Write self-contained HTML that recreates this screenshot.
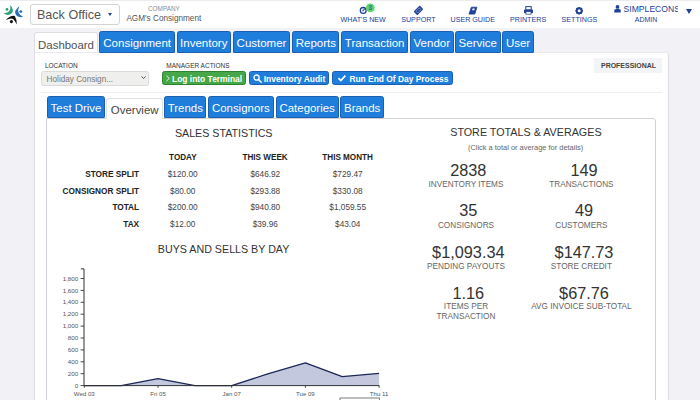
<!DOCTYPE html>
<html><head><meta charset="utf-8"><title>Back Office Dashboard</title>
<style>
*{box-sizing:border-box;margin:0;padding:0}
html,body{width:700px;height:400px;overflow:hidden}
body{background:#f2f2f6;font-family:"Liberation Sans",sans-serif;position:relative}
.t{position:absolute;white-space:nowrap}
.b{position:absolute}
</style></head><body>
<div class="b" style="left:0px;top:0px;width:700.00px;height:27.70px;background:#fff;"></div>
<div class="b" style="left:0px;top:0px;width:700.00px;height:1.20px;background:#ececee;"></div>
<svg class="b" style="left:0;top:0" width="30" height="28" viewBox="0 0 30 28">
<circle cx="7" cy="9.4" r="1.4" fill="#2f9e77"/>
<path d="M3.4 12.9 Q9 17.2 12.5 12.2 Q13.8 9 10.3 4.9 Q10.9 9.3 9.4 11 Q7.3 13.4 3.4 12.9 Z" fill="#2f9e77"/>
<circle cx="20.8" cy="11.6" r="1.45" fill="#2a6fb5"/>
<path d="M19.5 6.1 Q13 11 16.2 15.2 Q19 18 23.1 16.8 Q19.8 15.3 18.7 12.8 Q17.4 10 19.5 6.1 Z" fill="#2a6fb5"/>
<circle cx="11.4" cy="21.6" r="1.55" fill="#111"/>
<path d="M5.7 20.3 Q10 15 14.8 15.9 Q16.8 19 16.8 24.5 Q14.8 20.3 13.2 18.9 Q10 17.9 5.7 20.3 Z" fill="#111"/>
</svg>
<div class="b" style="left:30px;top:4.4px;width:89.80px;height:20.20px;border:1px solid #d4d4d4;border-radius:3px;background:#fff;"></div>
<div class="t" style="font-size:12.56px;line-height:14px;top:8px;color:#555;left:37px;">Back Office</div>
<div class="b" style="left:107.7px;top:13px;width:0;height:0;border-left:2.9px solid transparent;border-right:2.9px solid transparent;border-top:3.1px solid #20409a"></div>
<div class="t" style="font-size:6.4px;line-height:7px;top:5px;color:#8a8a8a;left:148px;">COMPANY</div>
<div class="t" style="font-size:8.2px;line-height:9px;top:14px;color:#555;left:126.4px;">AGM's Consignment</div>
<div class="t" style="font-size:7.15px;line-height:8px;top:16px;color:#20409a;left:363.2px;transform:translateX(-50%);">WHAT'S NEW</div>
<div class="t" style="font-size:7.15px;line-height:8px;top:16px;color:#20409a;left:418.4px;transform:translateX(-50%);">SUPPORT</div>
<div class="t" style="font-size:7.15px;line-height:8px;top:16px;color:#20409a;left:472.7px;transform:translateX(-50%);">USER GUIDE</div>
<div class="t" style="font-size:7.15px;line-height:8px;top:16px;color:#20409a;left:528.1px;transform:translateX(-50%);">PRINTERS</div>
<div class="t" style="font-size:7.15px;line-height:8px;top:16px;color:#20409a;left:579.4px;transform:translateX(-50%);">SETTINGS</div>
<div class="t" style="font-size:6.95px;line-height:7px;top:16px;color:#20409a;left:646px;transform:translateX(-50%);">ADMIN</div>
<div class="b" style="left:623.6px;top:0;width:54.4px;height:20px;overflow:hidden"><div class="t" style="left:0;top:4px;font-size:8.6px;line-height:10px;color:#20409a">SIMPLECONS</div></div>
<div class="b" style="left:685.6px;top:9px;width:0;height:0;border-left:3px solid transparent;border-right:3px solid transparent;border-top:5.6px solid #20409a"></div>
<svg class="b" style="left:350px;top:0" width="350" height="18" viewBox="350 0 350 18">
<circle cx="363.2" cy="10.4" r="2.9" fill="none" stroke="#20409a" stroke-width="1.25"/>
<path d="M362.8 10.9 L364.4 9.2" stroke="#20409a" stroke-width="1.1" stroke-linecap="round"/>
<circle cx="370.3" cy="7.8" r="4.4" fill="#5fd66a"/>
<text x="370.3" y="10.1" font-size="6.4" font-weight="bold" fill="#2f6f8f" text-anchor="middle" font-family="Liberation Sans, sans-serif">3</text>
<g transform="translate(418.5 10.4) rotate(-45)"><rect x="-4.3" y="-2.6" width="8.6" height="5.2" rx="0.8" fill="#20409a"/><rect x="-2.4" y="-1.2" width="4.8" height="2.4" fill="none" stroke="#fff" stroke-width="0.5" stroke-opacity="0.8"/></g>
<path d="M471.4 7.2 H476.9 L474.8 14.1 H469.0 Z" fill="#20409a" stroke="#20409a" stroke-width="0.8" stroke-linejoin="round"/>
<path d="M472.6 8.6 H474.8 L474.3 10.2 H472.1 Z" fill="#fff"/>
<rect x="525.8" y="6.6" width="5.4" height="3.4" fill="none" stroke="#20409a" stroke-width="1"/>
<rect x="524" y="9.6" width="9" height="3.6" rx="0.8" fill="#20409a"/>
<rect x="526" y="11.6" width="5" height="2.6" fill="#fff" stroke="#20409a" stroke-width="0.7"/>
<circle cx="579.2" cy="10.7" r="2.5" fill="none" stroke="#20409a" stroke-width="2"/>
<g stroke="#20409a" stroke-width="1.5" stroke-linecap="butt">
<path d="M579.2 6.9 V8.2 M579.2 13.2 V14.5 M575.4 10.7 H576.7 M581.7 10.7 H583 M576.5 8 L577.4 8.9 M581 12.5 L581.9 13.4 M576.5 13.4 L577.4 12.5 M581 8.9 L581.9 8"/></g>
<circle cx="617.5" cy="6.9" r="1.9" fill="#20409a"/>
<path d="M614.3 12.6 V10.6 Q614.3 9 616 9 H619 Q620.7 9 620.7 10.6 V12.6 Z" fill="#20409a"/>
</svg>
<div class="b" style="left:33.8px;top:52px;width:634.80px;height:368.00px;background:#fff;border:1px solid #dedee2;border-top-color:#ebebef;border-radius:0 3px 0 0;"></div>
<div class="b" style="left:33.8px;top:32px;width:64.40px;height:20.20px;background:#fff;border:1px solid #dedee2;border-bottom:none;border-radius:3px 3px 0 0;"></div>
<div class="t" style="font-size:11.42px;line-height:12px;top:39px;color:#505050;left:38.1px;">Dashboard</div>
<div class="b" style="left:99.4px;top:31.3px;width:75.60px;height:21.70px;background:#1f7ddb;border:1px solid #1a5fb0;border-radius:2.5px 2.5px 1px 1px;"></div>
<div class="t" style="font-size:11.5px;line-height:12px;top:37px;color:#fff;left:137.2px;transform:translateX(-50%);">Consignment</div>
<div class="b" style="left:176.5px;top:31.3px;width:54.50px;height:21.70px;background:#1f7ddb;border:1px solid #1a5fb0;border-radius:2.5px 2.5px 1px 1px;"></div>
<div class="t" style="font-size:11.5px;line-height:12px;top:37px;color:#fff;left:203.75px;transform:translateX(-50%);">Inventory</div>
<div class="b" style="left:232.6px;top:31.3px;width:57.80px;height:21.70px;background:#1f7ddb;border:1px solid #1a5fb0;border-radius:2.5px 2.5px 1px 1px;"></div>
<div class="t" style="font-size:11.5px;line-height:12px;top:37px;color:#fff;left:261.5px;transform:translateX(-50%);">Customer</div>
<div class="b" style="left:292.2px;top:31.3px;width:47.30px;height:21.70px;background:#1f7ddb;border:1px solid #1a5fb0;border-radius:2.5px 2.5px 1px 1px;"></div>
<div class="t" style="font-size:11.5px;line-height:12px;top:37px;color:#fff;left:315.85px;transform:translateX(-50%);">Reports</div>
<div class="b" style="left:341.2px;top:31.3px;width:67.00px;height:21.70px;background:#1f7ddb;border:1px solid #1a5fb0;border-radius:2.5px 2.5px 1px 1px;"></div>
<div class="t" style="font-size:11.5px;line-height:12px;top:37px;color:#fff;left:374.7px;transform:translateX(-50%);">Transaction</div>
<div class="b" style="left:410px;top:31.3px;width:43.60px;height:21.70px;background:#1f7ddb;border:1px solid #1a5fb0;border-radius:2.5px 2.5px 1px 1px;"></div>
<div class="t" style="font-size:11.5px;line-height:12px;top:37px;color:#fff;left:431.8px;transform:translateX(-50%);">Vendor</div>
<div class="b" style="left:455px;top:31.3px;width:45.60px;height:21.70px;background:#1f7ddb;border:1px solid #1a5fb0;border-radius:2.5px 2.5px 1px 1px;"></div>
<div class="t" style="font-size:11.5px;line-height:12px;top:37px;color:#fff;left:477.8px;transform:translateX(-50%);">Service</div>
<div class="b" style="left:502.4px;top:31.3px;width:31.30px;height:21.70px;background:#1f7ddb;border:1px solid #1a5fb0;border-radius:2.5px 2.5px 1px 1px;"></div>
<div class="t" style="font-size:11.5px;line-height:12px;top:37px;color:#fff;left:518.05px;transform:translateX(-50%);">User</div>
<div class="t" style="font-size:6.5px;line-height:7px;top:62px;color:#333;left:44.9px;">LOCATION</div>
<div class="b" style="left:41.4px;top:71.3px;width:107.70px;height:14.70px;background:#efefee;border:1px solid #dadada;border-radius:2.5px;"></div>
<div class="t" style="font-size:8.2px;line-height:9px;top:75px;color:#777;left:46.6px;">Holiday Consign...</div>
<svg class="b" style="left:140px;top:74px" width="8" height="8" viewBox="0 0 8 8"><path d="M1.6 2.4 L3.6 4.6 L5.6 2.4" fill="none" stroke="#444" stroke-width="0.9"/></svg>
<div class="t" style="font-size:6.5px;line-height:7px;top:62px;color:#333;left:166.3px;">MANAGER ACTIONS</div>
<div class="b" style="left:162.3px;top:70.9px;width:83.40px;height:14.60px;background:#45a748;border:1px solid #2f8232;border-radius:2.5px;"></div>
<svg class="b" style="left:165px;top:74px" width="6" height="9" viewBox="0 0 6 9"><path d="M1.5 1.8 L4.3 4.4 L1.5 7" fill="none" stroke="#fff" stroke-width="0.9"/></svg>
<div class="t" style="font-size:8.45px;line-height:10px;top:74px;color:#fff;font-weight:bold;left:172px;">Log into Terminal</div>
<div class="b" style="left:249.4px;top:70.9px;width:79.80px;height:14.60px;background:#1f7ddb;border:1px solid #1a5fb0;border-radius:2.5px;"></div>
<svg class="b" style="left:252px;top:73px" width="11" height="11" viewBox="0 0 11 11"><circle cx="4.6" cy="4.6" r="2.6" fill="none" stroke="#fff" stroke-width="1.3"/><path d="M6.6 6.6 L9.2 9.2" stroke="#fff" stroke-width="1.5" stroke-linecap="round"/></svg>
<div class="t" style="font-size:8.45px;line-height:10px;top:74px;color:#fff;font-weight:bold;left:263.7px;">Inventory Audit</div>
<div class="b" style="left:332.3px;top:70.9px;width:120.60px;height:14.60px;background:#1f7ddb;border:1px solid #1a5fb0;border-radius:2.5px;"></div>
<svg class="b" style="left:337px;top:73px" width="10" height="10" viewBox="0 0 10 10"><path d="M1.4 5.2 L3.8 7.6 L8.4 2.6" fill="none" stroke="#fff" stroke-width="1.7"/></svg>
<div class="t" style="font-size:8.42px;line-height:10px;top:74px;color:#fff;font-weight:bold;left:349.4px;">Run End Of Day Process</div>
<div class="b" style="left:594.4px;top:58.4px;width:68.00px;height:14.80px;background:#f3f4f7;"></div>
<div class="t" style="font-size:6.97px;line-height:7px;top:62px;color:#444;font-weight:bold;left:628.5px;transform:translateX(-50%);">PROFESSIONAL</div>
<div class="b" style="left:41.4px;top:92px;width:621.00px;height:1.00px;background:#efeff2;"></div>
<div class="b" style="left:46.3px;top:117.6px;width:609.50px;height:302.40px;background:#fff;border:1px solid #d2d2d6;border-radius:0 3px 0 0;"></div>
<div class="b" style="left:46.9px;top:96.3px;width:58.20px;height:21.50px;background:#1f7ddb;border:1px solid #1a5fb0;border-radius:2.5px 2.5px 1px 1px;"></div>
<div class="t" style="font-size:11.45px;line-height:12px;top:102px;color:#fff;left:76.0px;transform:translateX(-50%);">Test Drive</div>
<div class="b" style="left:164.3px;top:96.3px;width:42.00px;height:21.50px;background:#1f7ddb;border:1px solid #1a5fb0;border-radius:2.5px 2.5px 1px 1px;"></div>
<div class="t" style="font-size:11.45px;line-height:12px;top:102px;color:#fff;left:185.3px;transform:translateX(-50%);">Trends</div>
<div class="b" style="left:208px;top:96.3px;width:65.70px;height:21.50px;background:#1f7ddb;border:1px solid #1a5fb0;border-radius:2.5px 2.5px 1px 1px;"></div>
<div class="t" style="font-size:11.45px;line-height:12px;top:102px;color:#fff;left:240.85px;transform:translateX(-50%);">Consignors</div>
<div class="b" style="left:275.7px;top:96.3px;width:62.90px;height:21.50px;background:#1f7ddb;border:1px solid #1a5fb0;border-radius:2.5px 2.5px 1px 1px;"></div>
<div class="t" style="font-size:11.45px;line-height:12px;top:102px;color:#fff;left:307.15px;transform:translateX(-50%);">Categories</div>
<div class="b" style="left:340px;top:96.3px;width:44.30px;height:21.50px;background:#1f7ddb;border:1px solid #1a5fb0;border-radius:2.5px 2.5px 1px 1px;"></div>
<div class="t" style="font-size:11.45px;line-height:12px;top:102px;color:#fff;left:362.15px;transform:translateX(-50%);">Brands</div>
<div class="b" style="left:106.3px;top:97.7px;width:56.60px;height:21.30px;background:#fff;border:1px solid #e2e2e6;border-bottom:none;border-radius:3px 3px 0 0;"></div>
<div class="t" style="font-size:11.45px;line-height:12px;top:104px;color:#444;left:134.7px;transform:translateX(-50%);">Overview</div>
<div class="t" style="font-size:10.7px;line-height:12px;top:127px;color:#333;left:223.7px;transform:translateX(-50%);">SALES STATISTICS</div>
<div class="t" style="font-size:8.15px;line-height:9px;top:153px;color:#222;font-weight:bold;left:182.9px;transform:translateX(-50%);">TODAY</div>
<div class="t" style="font-size:8.15px;line-height:9px;top:153px;color:#222;font-weight:bold;left:265.1px;transform:translateX(-50%);">THIS WEEK</div>
<div class="t" style="font-size:8.15px;line-height:9px;top:153px;color:#222;font-weight:bold;left:347.6px;transform:translateX(-50%);">THIS MONTH</div>
<div class="t" style="font-size:8.25px;line-height:9px;top:170px;color:#222;font-weight:bold;right:560.9px;">STORE SPLIT</div>
<div class="t" style="font-size:8.25px;line-height:9px;top:170px;color:#444;left:182.7px;transform:translateX(-50%);">$120.00</div>
<div class="t" style="font-size:8.25px;line-height:9px;top:170px;color:#444;left:265.3px;transform:translateX(-50%);">$646.92</div>
<div class="t" style="font-size:8.25px;line-height:9px;top:170px;color:#444;left:347.7px;transform:translateX(-50%);">$729.47</div>
<div class="t" style="font-size:8.25px;line-height:9px;top:187px;color:#222;font-weight:bold;right:560.9px;">CONSIGNOR SPLIT</div>
<div class="t" style="font-size:8.25px;line-height:9px;top:187px;color:#444;left:182.7px;transform:translateX(-50%);">$80.00</div>
<div class="t" style="font-size:8.25px;line-height:9px;top:187px;color:#444;left:265.3px;transform:translateX(-50%);">$293.88</div>
<div class="t" style="font-size:8.25px;line-height:9px;top:187px;color:#444;left:347.7px;transform:translateX(-50%);">$330.08</div>
<div class="t" style="font-size:8.25px;line-height:9px;top:203px;color:#222;font-weight:bold;right:560.9px;">TOTAL</div>
<div class="t" style="font-size:8.25px;line-height:9px;top:203px;color:#444;left:182.7px;transform:translateX(-50%);">$200.00</div>
<div class="t" style="font-size:8.25px;line-height:9px;top:203px;color:#444;left:265.3px;transform:translateX(-50%);">$940.80</div>
<div class="t" style="font-size:8.25px;line-height:9px;top:203px;color:#444;left:347.7px;transform:translateX(-50%);">$1,059.55</div>
<div class="t" style="font-size:8.25px;line-height:9px;top:220px;color:#222;font-weight:bold;right:560.9px;">TAX</div>
<div class="t" style="font-size:8.25px;line-height:9px;top:220px;color:#444;left:182.7px;transform:translateX(-50%);">$12.00</div>
<div class="t" style="font-size:8.25px;line-height:9px;top:220px;color:#444;left:265.3px;transform:translateX(-50%);">$39.96</div>
<div class="t" style="font-size:8.25px;line-height:9px;top:220px;color:#444;left:347.7px;transform:translateX(-50%);">$43.04</div>
<div class="t" style="font-size:10.7px;line-height:12px;top:243px;color:#333;left:223.6px;transform:translateX(-50%);">BUYS AND SELLS BY DAY</div>
<svg class="b" style="left:40px;top:258px" width="380" height="142" viewBox="40 258 380 142" font-family="Liberation Sans, sans-serif"><path d="M84.3 385.6 L121.2 385.6 L158.0 378.6 L194.9 385.6 L231.7 385.6 L268.6 373.7 L305.4 362.9 L342.2 376.6 L379.1 373.4 L379.1 385.6 L84.3 385.6 Z" fill="#c4c8de"/><path d="M84.3 385.6 L121.2 385.6 L158.0 378.6 L194.9 385.6 L231.7 385.6 L268.6 373.7 L305.4 362.9 L342.2 376.6 L379.1 373.4" fill="none" stroke="#1b2757" stroke-width="1.3" stroke-linejoin="round"/><path d="M80.8 268.9 H84 V385.6 H379.3" fill="none" stroke="#333" stroke-width="1"/><path d="M80.6 385.6 H84 M80.6 373.7 H84 M80.6 361.8 H84 M80.6 349.9 H84 M80.6 338.0 H84 M80.6 326.1 H84 M80.6 314.2 H84 M80.6 302.3 H84 M80.6 290.4 H84 M80.6 278.5 H84 M84.3 385.6 V387.8 M158.0 385.6 V387.8 M231.7 385.6 V387.8 M305.4 385.6 V387.8 M379.1 385.6 V387.8 " stroke="#333" stroke-width="0.9" fill="none"/><g font-size="6.2" fill="#555" text-anchor="end"><text x="78.2" y="387.7">0</text><text x="78.2" y="375.8">200</text><text x="78.2" y="363.9">400</text><text x="78.2" y="352.0">600</text><text x="78.2" y="340.1">800</text><text x="78.2" y="328.2">1,000</text><text x="78.2" y="316.3">1,200</text><text x="78.2" y="304.4">1,400</text><text x="78.2" y="292.5">1,600</text><text x="78.2" y="280.6">1,800</text></g><g font-size="6.1" fill="#555" text-anchor="middle"><text x="84.3" y="396.2">Wed 03</text><text x="158.0" y="396.2">Fri 05</text><text x="231.7" y="396.2">Jan 07</text><text x="305.4" y="396.2">Tue 09</text><text x="379.1" y="396.2">Thu 11</text></g><rect x="340" y="398" width="39.4" height="6" fill="none" stroke="#444" stroke-width="0.7"/></svg>
<div class="t" style="font-size:10.75px;line-height:12px;top:126px;color:#333;left:525.9px;transform:translateX(-50%);">STORE TOTALS &amp; AVERAGES</div>
<div class="t" style="font-size:7.45px;line-height:9px;top:143px;color:#666;left:525.6px;transform:translateX(-50%);">(Click a total or average for details)</div>
<div class="t" style="font-size:16.3px;line-height:18px;top:161px;color:#333;left:468.3px;transform:translateX(-50%);">2838</div>
<div class="t" style="font-size:16.3px;line-height:18px;top:161px;color:#333;left:584px;transform:translateX(-50%);">149</div>
<div class="t" style="font-size:8.22px;line-height:9px;top:180px;color:#666;left:466.0px;transform:translateX(-50%);">INVENTORY ITEMS</div>
<div class="t" style="font-size:8.22px;line-height:9px;top:180px;color:#666;left:581.4px;transform:translateX(-50%);">TRANSACTIONS</div>
<div class="t" style="font-size:16.3px;line-height:18px;top:201px;color:#333;left:468.3px;transform:translateX(-50%);">35</div>
<div class="t" style="font-size:16.3px;line-height:18px;top:201px;color:#333;left:584px;transform:translateX(-50%);">49</div>
<div class="t" style="font-size:8.22px;line-height:9px;top:221px;color:#666;left:466.0px;transform:translateX(-50%);">CONSIGNORS</div>
<div class="t" style="font-size:8.22px;line-height:9px;top:221px;color:#666;left:581.4px;transform:translateX(-50%);">CUSTOMERS</div>
<div class="t" style="font-size:16.3px;line-height:18px;top:243px;color:#333;left:468.3px;transform:translateX(-50%);">$1,093.34</div>
<div class="t" style="font-size:16.3px;line-height:18px;top:243px;color:#333;left:584px;transform:translateX(-50%);">$147.73</div>
<div class="t" style="font-size:8.22px;line-height:9px;top:262px;color:#666;left:466.0px;transform:translateX(-50%);">PENDING PAYOUTS</div>
<div class="t" style="font-size:8.22px;line-height:9px;top:262px;color:#666;left:581.4px;transform:translateX(-50%);">STORE CREDIT</div>
<div class="t" style="font-size:16.3px;line-height:18px;top:284px;color:#333;left:468.3px;transform:translateX(-50%);">1.16</div>
<div class="t" style="font-size:16.3px;line-height:18px;top:284px;color:#333;left:584px;transform:translateX(-50%);">$67.76</div>
<div class="t" style="font-size:8.22px;line-height:9px;top:302px;color:#666;left:466.0px;transform:translateX(-50%);">ITEMS PER</div>
<div class="t" style="font-size:8.22px;line-height:9px;top:312px;color:#666;left:466.0px;transform:translateX(-50%);">TRANSACTION</div>
<div class="t" style="font-size:8.22px;line-height:9px;top:302px;color:#666;left:581.4px;transform:translateX(-50%);">AVG INVOICE SUB-TOTAL</div>
</body></html>
